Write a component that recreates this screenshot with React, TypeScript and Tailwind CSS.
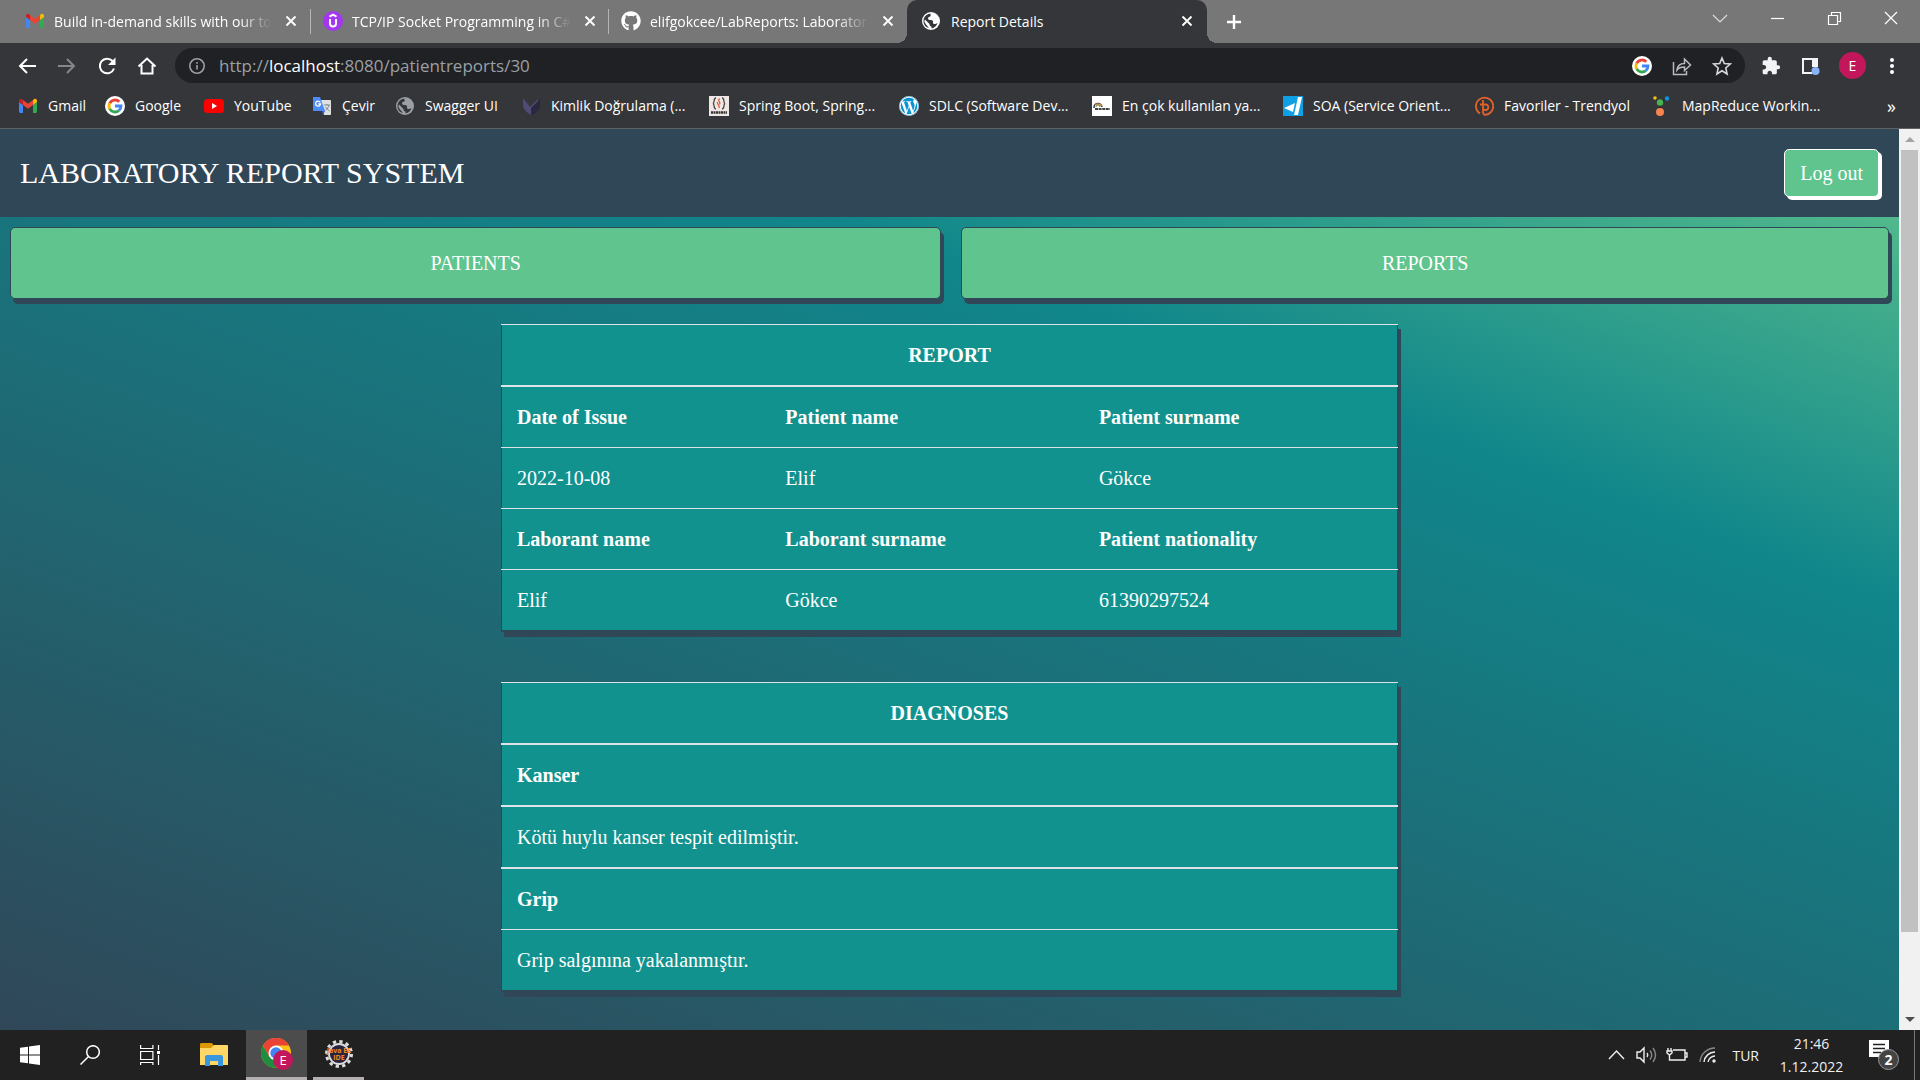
import { ReactNode } from "react";
import { FaGithub, FaWordpress } from "react-icons/fa";
import { MdExtension } from "react-icons/md";

type Tab = { title: string; icon: ReactNode; active?: boolean };
type Bookmark = { label: string; icon: ReactNode; width: string };

function GmailIcon() {
    return (
        <svg viewBox="0 0 20 20" className="size-5 shrink-0">
            <path fill="#4285f4" d="M1 6v9.5c0 .8.6 1.5 1.4 1.5H5V9L1 6z" />
            <path fill="#34a853" d="M15 17h2.6c.8 0 1.4-.7 1.4-1.5V6l-4 3v8z" />
            <path fill="#fbbc04" d="M15 4.4V9l4-3V4.8c0-1.8-2-2.5-3.2-1.5L15 4.4z" />
            <path fill="#ea4335" d="M5 9V4l5 3.8L15 4v5l-5 3.8L5 9z" />
            <path fill="#c5221f" d="M1 4.8V6l4 3V4l-.8-.7C3 2.4 1 3 1 4.8z" />
        </svg>
    );
}

function GoogleIcon() {
    return (
        <svg viewBox="0 0 20 20" className="size-5 shrink-0">
            <circle cx="10" cy="10" r="10" fill="#fff" />
            <g fill="none" strokeWidth="2.8">
                <path stroke="#ea4335" d="M4.7 7.3A6 6 0 0 1 14.3 5.8" />
                <path stroke="#fbbc05" d="M4.8 13A6 6 0 0 1 4.7 7.2" />
                <path stroke="#34a853" d="M13.8 14.6A6 6 0 0 1 4.7 12.8" />
                <path stroke="#4285f4" d="M10 10h6a6 6 0 0 1-2.2 4.7" />
            </g>
        </svg>
    );
}

function GlobeIcon({ disc, land }: { disc: string; land: string }) {
    return (
        <svg viewBox="0 0 20 20" className="size-5 shrink-0">
            <circle cx="10" cy="10" r="9" fill={disc} />
            <path fill={land} d="M11 2.500c-2 0-2 1.500-1 2.500-1.500.5-3 1-3 2.500s1.500 1.500 3 1.500 2.500 1 2 2.500 1 1.500 2.500 1.500l2-1c-.5 2.500-3 5-6 5.500v-2c-1.500 0-2-1-2-2.500L4 8.500C3.500 9 3.500 10 3.500 11L5 13.500 8 17C4 16.300 2.500 13 2.500 10c0-4 3-7.500 8.500-7.500z" />
        </svg>
    );
}

function YoutubeIcon() {
    return (
        <svg viewBox="0 0 20 20" className="size-5 shrink-0">
            <rect y="3" width="20" height="14" rx="3.5" fill="#f00" />
            <path fill="#fff" d="M8 7v6l5-3z" />
        </svg>
    );
}

function TranslateIcon() {
    return (
        <svg viewBox="0 0 20 20" className="size-5 shrink-0">
            <path fill="#e0e0e0" d="M8 4h10c.6 0 1 .4 1 1v13c0 .6-.4 1-1 1h-6z" />
            <path fill="#3367d6" d="M10 15h3l-2 4z" />
            <path fill="#4d8bf5" d="M1 1h7l5 14H2c-.6 0-1-.4-1-1z" />
            <path fill="none" stroke="#fff" strokeWidth="1.3" d="M8.2 6.3A2.5 2.5 0 1 0 8.6 8H6.3" />
            <path fill="none" stroke="#7a8794" d="M12 9h6M15 8v1M17 9c-.5 2.5-2 4-3.5 5M13.5 11c1 1.5 2.5 3 4 4" />
        </svg>
    );
}

function UdemyIcon() {
    return (
        <svg viewBox="0 0 20 20" className="size-5 shrink-0">
            <circle cx="10" cy="10" r="10" fill="#a435f0" />
            <path fill="none" stroke="#fff" strokeWidth="2" d="M6.5 5.6 10 3.6l3.500 2M7 8v4.500a3 3 0 0 0 6 0V8" />
        </svg>
    );
}

function ShieldIcon() {
    return (
        <svg viewBox="0 0 20 20" className="size-5 shrink-0">
            <path fill="#514a75" d="M2 2l7 9 8-8v7c0 4-4 7-7 9-3-2-8-5-8-10z" />
            <path fill="#2a2740" d="M10 12l9-9v7c0 4-5 8-9 9z" />
        </svg>
    );
}

function JavaReaderIcon() {
    return (
        <svg viewBox="0 0 20 20" className="size-5 shrink-0">
            <path fill="#eee7e3" d="M0 0h20v20H0z" />
            <path fill="none" stroke="#444" strokeWidth="1.3" d="M7 2C4 2 6 7 4 7.500 6 8 4 13 7 13M13 2c3 0 1 5 3 5.500-2 .5 0 5.500-3 5.500" />
            <path fill="none" stroke="#e2583a" strokeWidth="1.3" d="M10.500 2.500c-3 3 2 3 0 6M8.500 6c-1 3 3 3 1.500 6" />
            <path stroke="#333" strokeWidth="2.5" strokeDasharray="2 .5" d="M2 16.500h16" />
        </svg>
    );
}

function RainbowIcon() {
    return (
        <svg viewBox="0 0 20 20" className="size-5 shrink-0">
            <path fill="#fff" d="M0 0h20v20H0z" />
            <path fill="none" stroke="#333" strokeWidth="1.5" d="M2 12a4 4 0 0 1 8-1" />
            <path fill="none" stroke="#e8863a" strokeWidth="1.5" d="M3.500 9a4 4 0 0 1 6 1" />
            <path fill="none" stroke="#3f9c57" d="M4 11a2 2 0 0 1 4 0" />
            <path stroke="#444" strokeWidth="2" strokeDasharray="3 .6" d="M3 13h15" />
        </svg>
    );
}

function SoaIcon() {
    return (
        <svg viewBox="0 0 20 20" className="size-5 shrink-0">
            <path fill="#0f9fe4" d="M0 0h20v20H0z" />
            <path fill="#fff" d="M15 1h4l-4 18h-4zM12 7l-2 9-9-4z" />
        </svg>
    );
}

function TrendyolIcon() {
    return (
        <svg viewBox="0 0 20 20" className="size-5 shrink-0" fill="none" stroke="#e2622b" strokeWidth="1.8">
            <path d="M6 17.500A8.600 8.600 0 1 1 10 18.800" />
            <path d="M9 4v12c0 2 1 3 2.500 2.700M6 8.500h5.500c4 0 3.500 5.500 0 5.500-2 0-2.500-1-2.500-2" />
        </svg>
    );
}

function MapReduceIcon() {
    return (
        <svg viewBox="0 0 20 20" className="size-5 shrink-0">
            <path stroke="#222" d="M3 2l5 4 7-4M8 6v9" fill="none" />
            <circle cx="3" cy="2" r="1.8" fill="#f4c20d" />
            <circle cx="15" cy="2.500" r="2.200" fill="#0a94e0" />
            <circle cx="8" cy="6.500" r="3.200" fill="#4bb04f" />
            <circle cx="8" cy="16" r="4" fill="#f7834f" />
        </svg>
    );
}

function CloseIcon() {
    return (
        <svg viewBox="0 0 20 20" className="size-5" fill="none" stroke="#fff" strokeWidth="1.9">
            <path d="M5.500 5.500l9 9m0-9l-9 9" />
        </svg>
    );
}

const tabs: Tab[] = [
    { title: "Build in-demand skills with our to", icon: <GmailIcon /> },
    { title: "TCP/IP Socket Programming in C#", icon: <UdemyIcon /> },
    { title: "elifgokcee/LabReports: Laborator", icon: <FaGithub className="size-5 shrink-0" /> },
    { title: "Report Details", icon: <GlobeIcon disc="#fff" land="#35363a" />, active: true }
];

const bookmarks: Bookmark[] = [
    { label: "Gmail", icon: <GmailIcon />, width: "w-[87px]" },
    { label: "Google", icon: <GoogleIcon />, width: "w-[99px]" },
    { label: "YouTube", icon: <YoutubeIcon />, width: "w-[108px]" },
    { label: "Çevir", icon: <TranslateIcon />, width: "w-[83px]" },
    { label: "Swagger UI", icon: <GlobeIcon disc="#9aa0a6" land="#35363a" />, width: "w-[126px]" },
    { label: "Kimlik Doğrulama (...", icon: <ShieldIcon />, width: "w-[188px]" },
    { label: "Spring Boot, Spring...", icon: <JavaReaderIcon />, width: "w-[190px]" },
    { label: "SDLC (Software Dev...", icon: <FaWordpress className="size-5 shrink-0 rounded-full bg-white text-[#0a94d2]" />, width: "w-[193px]" },
    { label: "En çok kullanılan ya...", icon: <RainbowIcon />, width: "w-[191px]" },
    { label: "SOA (Service Orient...", icon: <SoaIcon />, width: "w-[191px]" },
    { label: "Favoriler - Trendyol", icon: <TrendyolIcon />, width: "w-[178px]" },
    { label: "MapReduce Workin...", icon: <MapReduceIcon />, width: "w-[190px]" }
];

function TabStrip() {
    return (
        <div className="flex h-[43px] items-stretch bg-[#777777] pl-[13px]">
            {tabs.map((tab, i) => (
                <div
                    key={tab.title}
                    className={tab.active
                        ? "relative flex w-[300px] items-center rounded-t-[10px] bg-[#35363a] pl-[14px] pr-[10px] pb-px"
                        : "flex w-[298px] items-center pb-px"}
                >
                    <div className={tab.active ? "flex min-w-0 flex-1 items-center gap-[10px]" : "flex min-w-0 flex-1 items-center gap-[9px] pl-3 pr-[9px]"}>
                        {tab.icon}
                        <span className={tab.active
                            ? "flex-1 whitespace-nowrap"
                            : "flex-1 whitespace-nowrap [mask-image:linear-gradient(to_right,#000_85%,transparent)]"}
                        >
                            {tab.title}
                        </span>
                        <button aria-label="Close tab"><CloseIcon /></button>
                    </div>
                    {!tab.active && i < 2 && <div className="h-[25px] w-px bg-[#b5b5b5]" />}
                    {tab.active && (
                        <>
                            <span className="absolute bottom-0 -left-[10px] size-[10px] bg-[radial-gradient(circle_at_0_0,transparent_10px,#35363a_10px)]" />
                            <span className="absolute bottom-0 -right-[10px] size-[10px] bg-[radial-gradient(circle_at_100%_0,transparent_10px,#35363a_10px)]" />
                        </>
                    )}
                </div>
            ))}
            <button aria-label="New tab" className="ml-[19px] self-center">
                <svg viewBox="0 0 16 16" className="size-4" stroke="#fff" strokeWidth="2.4">
                    <path d="M8 1v14M1 8h14" />
                </svg>
            </button>
            <div className="ml-auto flex items-center pr-[19px] pb-2">
                <svg viewBox="0 0 200 20" className="h-5 w-[200px]" fill="none" stroke="#fff" strokeWidth="1.2">
                    <path stroke="#ddd" d="M12 7l7 7 7-7" />
                    <path d="M70 10.500h13" />
                    <path d="M127.500 7.500h9v9h-9zM130.500 7.500v-3h9v9h-3" />
                    <path d="M184 4l12 12m0-12l-12 12" />
                </svg>
            </div>
        </div>
    );
}

function AddressBar() {
    return (
        <div className="flex h-[45px] items-center bg-[#35363a] pl-[17px] pr-[18px]">
            <div className="flex gap-5">
                <button aria-label="Back">
                    <svg viewBox="0 0 20 20" className="size-5" fill="none" stroke="#fff" strokeWidth="2"><path d="M19 10H3M10 3l-7 7 7 7" /></svg>
                </button>
                <button aria-label="Forward">
                    <svg viewBox="0 0 20 20" className="size-5" fill="none" stroke="#85868a" strokeWidth="2"><path d="M1 10h16M10 3l7 7-7 7" /></svg>
                </button>
                <button aria-label="Reload">
                    <svg viewBox="0 0 20 20" className="size-5" fill="none" stroke="#fff" strokeWidth="2"><path d="M17 12.500A7.300 7.300 0 1 1 15.500 5l2 2" /><path fill="#fff" stroke="none" d="M18.500 1.500v7.500H11z" /></svg>
                </button>
                <button aria-label="Home">
                    <svg viewBox="0 0 20 20" className="size-5" fill="none" stroke="#fff" strokeWidth="2"><path d="M1.500 10.500L10 2.500l8.500 8M4.500 9v8.500h11V9" /></svg>
                </button>
            </div>
            <div className="ml-[18px] flex h-[35px] flex-1 items-center rounded-full bg-[#202124] pl-[14px] pr-[13px]">
                <svg viewBox="0 0 16 16" className="size-4" fill="none" stroke="#9aa0a6" strokeWidth="1.6">
                    <circle cx="8" cy="8" r="7.200" />
                    <path d="M8 7v4.500M8 4v1.700" />
                </svg>
                <p className="ml-[14px] flex-1 text-[17px] text-[#9aa0a6]">
                    http://<span className="text-white">localhost</span>:8080/patientreports/30
                </p>
                <div className="flex items-center gap-5">
                    <GoogleIcon />
                    <svg viewBox="0 0 20 20" className="size-5" fill="none" stroke="#b8bbbf" strokeWidth="1.5">
                        <path d="M1.500 6v12.500h13V15M5 14c.5-4 3-6.500 7.500-6.500V3l6 6-6 5.500V11C9 11 6.500 12 5 14z" />
                    </svg>
                    <svg viewBox="0 0 20 20" className="size-5" fill="none" stroke="#d5d7da" strokeWidth="1.6">
                        <path d="M10 2l2.300 5.500 6 .5-4.500 4 1.300 6-5.100-3.200L4.900 18l1.300-6L1.700 8l6-.5z" />
                    </svg>
                </div>
            </div>
            <div className="ml-4 flex items-center gap-[19px]">
                <MdExtension className="size-5 text-[#f1f3f4]" />
                <svg viewBox="0 0 20 20" className="size-5">
                    <path fill="none" stroke="#f1f3f4" strokeWidth="2" d="M12 17H3V3h14v8" />
                    <path fill="#f1f3f4" d="M12 2h6v9h-6z" />
                    <circle cx="15.500" cy="15" r="4" fill="#8ab4f8" />
                </svg>
                <span className="-mr-[3px] flex size-[27px] items-center justify-center rounded-full bg-[#c2185b] text-white">E</span>
                <svg viewBox="0 0 20 20" className="size-5" fill="#fff">
                    <circle cx="10" cy="4" r="2" /><circle cx="10" cy="10" r="2" /><circle cx="10" cy="16" r="2" />
                </svg>
            </div>
        </div>
    );
}

function BookmarksBar() {
    return (
        <nav className="flex h-[41px] items-center border-b border-[#5f6165] bg-[#35363a] pl-[18px] pr-6 pb-[5px]">
            {bookmarks.map((bookmark) => (
                <a key={bookmark.label} href="#" className={`flex shrink-0 items-center gap-[10px] whitespace-nowrap ${bookmark.width}`}>
                    {bookmark.icon}
                    {bookmark.label}
                </a>
            ))}
            <button className="ml-auto text-lg">»</button>
        </nav>
    );
}

function Cell({ children }: { children: ReactNode }) {
    return <td className="px-[15px] py-[15px]">{children}</td>;
}

function HeadCell({ children }: { children: ReactNode }) {
    return <th className="px-[15px] py-[15px] text-left">{children}</th>;
}

const tableClass = "w-full max-w-[897px] table-fixed border-collapse border-x border-b-2 border-[#304758] bg-[#12928e] leading-[30px] shadow-[3px_5px_#304758]";
const line = "border-t border-[#dee2e6]";
const thickLine = "border-t-2 border-[#dee2e6]";

function ReportTable() {
    return (
        <table className={tableClass}>
            <colgroup>
                <col className="w-[30%]" />
                <col className="w-[35%]" />
                <col className="w-[35%]" />
            </colgroup>
            <thead>
                <tr className={line}><th colSpan={3} className="py-[15px]">REPORT</th></tr>
            </thead>
            <tbody>
                <tr className={thickLine}>
                    <HeadCell>Date of Issue</HeadCell>
                    <HeadCell>Patient name</HeadCell>
                    <HeadCell>Patient surname</HeadCell>
                </tr>
                <tr className={line}>
                    <Cell>2022-10-08</Cell>
                    <Cell>Elif</Cell>
                    <Cell>Gökce</Cell>
                </tr>
                <tr className={line}>
                    <HeadCell>Laborant name</HeadCell>
                    <HeadCell>Laborant surname</HeadCell>
                    <HeadCell>Patient nationality</HeadCell>
                </tr>
                <tr className={line}>
                    <Cell>Elif</Cell>
                    <Cell>Gökce</Cell>
                    <Cell>61390297524</Cell>
                </tr>
            </tbody>
        </table>
    );
}

function DiagnosesTable() {
    return (
        <table className={tableClass}>
            <thead>
                <tr className={line}><th className="py-[15px]">DIAGNOSES</th></tr>
            </thead>
            <tbody>
                <tr className={thickLine}><HeadCell>Kanser</HeadCell></tr>
                <tr className={thickLine}><Cell>Kötü huylu kanser tespit edilmiştir.</Cell></tr>
                <tr className={thickLine}><HeadCell>Grip</HeadCell></tr>
                <tr className={line}><Cell>Grip salgınına yakalanmıştır.</Cell></tr>
            </tbody>
        </table>
    );
}

function ReportPage() {
    const navButton = "h-[72px] flex-auto rounded-[5px] border border-[#304758] bg-[#5fc48d] shadow-[3px_5px_#304758]";

    return (
        <main className="flex-1 bg-[linear-gradient(20deg,#304758,#10868b_70%,#5fc48d)] font-['Liberation_Serif',serif] text-[20px] text-white">
            <header className="flex h-[88px] items-center justify-between bg-[#304758] px-5">
                <h1 className="pb-[2px] text-[30px]">LABORATORY REPORT SYSTEM</h1>
                <button className="h-12 rounded-[5px] border border-white bg-[#5fc48d] px-[15px] shadow-[3px_3px_#fff]">Log out</button>
            </header>
            <nav className="flex gap-5 p-[10px]">
                <button className={navButton}>PATIENTS</button>
                <button className={navButton}>REPORTS</button>
            </nav>
            <div className="flex flex-col items-center gap-[50px] pt-[15px]">
                <ReportTable />
                <DiagnosesTable />
            </div>
        </main>
    );
}

function Scrollbar() {
    return (
        <div className="flex w-[21px] flex-col items-center bg-[#f1f1f1]">
            <div className="flex h-[21px] items-center"><svg viewBox="0 0 10 5" className="h-[5px] w-[10px]" fill="#a3a3a3"><path d="M0 5l5-5 5 5z" /></svg></div>
            <div className="w-[17px] flex-[91] bg-[#c1c1c1]" />
            <div className="flex-[9]" />
            <div className="flex h-[21px] items-center"><svg viewBox="0 0 10 5" className="h-[5px] w-[10px]" fill="#505050"><path d="M0 0l5 5 5-5z" /></svg></div>
        </div>
    );
}

function Taskbar() {
    return (
        <footer className="flex h-[50px] items-stretch bg-[#212121] text-[#f0f0f0]">
            <button aria-label="Start" className="flex w-[60px] items-center justify-center">
                <svg viewBox="0 0 20 20" className="size-5" fill="#fff"><path d="M0 2.800L8 1.700v7.800H0zM9 1.500L20 0v9.500H9zM0 10.500h8v7.800L0 17.200zM9 10.500h11V20L9 18.500z" /></svg>
            </button>
            <button aria-label="Search" className="flex w-[60px] items-center justify-center">
                <svg viewBox="0 0 20 20" className="size-5" fill="none" stroke="#fff" strokeWidth="1.500"><circle cx="13" cy="7" r="6.300" /><path d="M8.500 11.500L.5 19.500" /></svg>
            </button>
            <button aria-label="Task view" className="flex w-[60px] items-center justify-center">
                <svg viewBox="0 0 20 20" className="size-5" fill="none" stroke="#fff" strokeWidth="1.2"><path d="M.6 0v3.500h12.300V0M.6 6.500h12.300v8H.6zM.6 20v-2.500h12.300V20M18.500 0v5M18.500 10v10" /><path fill="#fff" stroke="none" d="M17 6h3v3h-3z" /></svg>
            </button>
            <button aria-label="Explorer" className="ml-1 flex w-[60px] items-center justify-center">
                <svg viewBox="0 0 28 24" className="h-6 w-7">
                    <path fill="#dd9800" d="M0 1.500C0 .7.500 0 1.300 0H12l2 3-2 3H0z" />
                    <path fill="#ffd767" d="M0 5h11l3-3h13c.6 0 1 .4 1 1v19H0z" />
                    <path fill="#3a96dd" d="M5 23v-9c0-1 .8-2 2-2h14c1 0 2 .9 2 2v9h-5v-5h-8v5z" />
                </svg>
            </button>
            <button aria-label="Chrome" className="ml-[2px] flex w-[61px] items-center justify-center border-b-[3px] border-[#b4afb2] bg-[#4c4c4c]">
                <svg viewBox="0 0 32 32" className="size-8">
                    <circle cx="15" cy="15" r="15" fill="#fbc116" />
                    <path fill="#1e8e3e" d="M2 7.500A15 15 0 0 0 15 30l6.500-11.200L8.500 18.800z" />
                    <path fill="#ea4335" d="M2 7.500A15 15 0 0 1 28 7.500H15L8.500 18.800z" />
                    <circle cx="15" cy="15" r="7.500" fill="#fff" />
                    <circle cx="15" cy="15" r="5.700" fill="#4285f4" />
                    <circle cx="22" cy="22" r="10" fill="#c2185b" />
                    <text x="22" y="26.500" fill="#fff" fontSize="13" textAnchor="middle" fontFamily="Open Sans">E</text>
                </svg>
            </button>
            <button aria-label="Eclipse" className="ml-[6px] flex w-[51px] items-center justify-center border-b-[3px] border-[#b4afb2]">
                <svg viewBox="0 0 28 28" className="size-7">
                    <circle cx="14" cy="14" r="12.500" fill="none" stroke="#ddd" strokeWidth="3" strokeDasharray="3.270 3.270" />
                    <circle cx="14" cy="14" r="10" fill="#29233f" stroke="#ddd" strokeWidth="1.800" />
                    <text x="14" y="13" fill="#f28c1c" fontSize="7" fontWeight="bold" textAnchor="middle" fontFamily="Open Sans">Java EE</text>
                    <text x="14" y="19.500" fill="#f28c1c" fontSize="7" fontWeight="bold" textAnchor="middle" fontFamily="Open Sans">IDE</text>
                </svg>
            </button>
            <div className="ml-auto flex items-center">
                <svg viewBox="0 0 110 20" className="h-5 w-[110px]" fill="none" stroke="#f0f0f0" strokeWidth="1.4">
                    <path d="M1 14l7.500-8 7.500 8" />
                    <path d="M29 7h3l4-4v14l-4-4h-3zM39 8q1.500 2 0 4" />
                    <path stroke="#888" d="M42 5.500q3.500 4.500 0 9M45 3q5 7 0 14" />
                    <path d="M65 5h12v10H63M77 8h2v4h-2M60 3v3M63 3v3M59 6h5v2l-2.500 2L59 8zM61.500 10v5H65" />
                    <path stroke="#888" d="M92 17A15 15 0 0 1 107 3" />
                    <path d="M96 17A11 11 0 0 1 107 7M100 17a7 7 0 0 1 7-6" />
                    <circle cx="106" cy="16" r="1" fill="#fff" />
                </svg>
                <span className="ml-[14px]">TUR</span>
                <div className="ml-[22px] flex w-[61px] flex-col items-center leading-[23px]">
                    <span>21:46</span>
                    <span>1.12.2022</span>
                </div>
                <button aria-label="Notifications" className="ml-[27px] mr-[15px]">
                    <svg viewBox="0 0 30 30" className="size-[30px]">
                        <path fill="#fff" d="M0 0h20v17h-8v3l-3-3H0z" />
                        <path stroke="#212121" strokeWidth="1.4" d="M4 4.500h12M4 8.500h12M4 12.500h8" />
                        <circle cx="19.500" cy="19.500" r="10" fill="#444" stroke="#999" />
                        <text x="19.500" y="24.500" fill="#fff" fontSize="14" fontWeight="bold" textAnchor="middle" fontFamily="Open Sans">2</text>
                    </svg>
                </button>
                <div className="mr-[5px] h-[50px] w-px bg-[#777]" />
            </div>
        </footer>
    );
}

export default function App() {
    return (
        <div className="flex min-h-screen flex-col font-['Open_Sans',sans-serif] text-[14px] text-white">
            <TabStrip />
            <AddressBar />
            <BookmarksBar />
            <div className="flex flex-1">
                <ReportPage />
                <Scrollbar />
            </div>
            <Taskbar />
        </div>
    );
}
